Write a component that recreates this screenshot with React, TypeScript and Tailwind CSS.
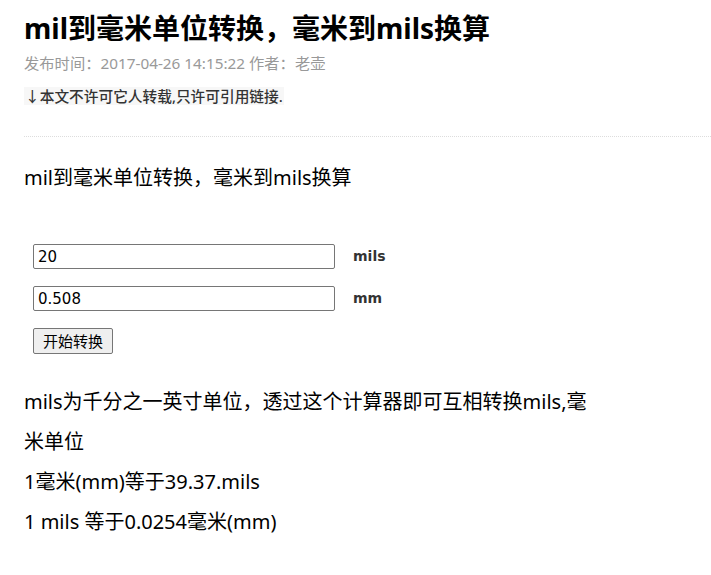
import { useState } from 'react'

const font = 'font-["Noto_Sans","Noto_Sans_CJK_SC",sans-serif]'

export default function App() {
  const [mils, setMils] = useState('20')
  const [mm, setMm] = useState('0.508')

  const convert = () => {
    const v = parseFloat(mils)
    if (!isNaN(v)) setMm(String(+(v * 0.0254).toFixed(6)))
  }

  return (
    <div className={`${font} min-h-[575px] bg-white pl-6 pt-[11px] text-black`}>
      <h1 className="text-[28px] font-bold leading-[34px]">mil到毫米单位转换，毫米到mils换算</h1>
      <div className="mt-[8px] text-[15.3px] leading-[20px] text-[#999]">
        发布时间：2017-04-26 14:15:22 作者：老壶
      </div>
      <div className="mt-[14px] inline-block bg-[#f7f7f7] px-[1px] text-[14.7px] font-medium leading-[18px] text-[#333]">
        ↓本文不许可它人转载,只许可引用链接.
      </div>
      <div className="mt-[28px] border-t border-dotted border-[#ddd]" />

      <p className="mt-[27px] text-[20px] leading-[28px]">mil到毫米单位转换，毫米到mils换算</p>

      <div className="mt-[52px] flex flex-col gap-[17px] pl-[9px]">
        <div className="flex items-center gap-[18px]">
          <input
            value={mils}
            onChange={(e) => setMils(e.target.value)}
            className="h-[25px] w-[302px] rounded-[2px] border border-[#767676] px-[4px] font-['DejaVu_Sans',sans-serif] text-[15px] outline-none"
          />
          <span className="font-['DejaVu_Sans',sans-serif] text-[14px] font-bold text-[#333]">mils</span>
        </div>
        <div className="flex items-center gap-[18px]">
          <input
            value={mm}
            onChange={(e) => setMm(e.target.value)}
            className="h-[25px] w-[302px] rounded-[2px] border border-[#767676] px-[4px] font-['DejaVu_Sans',sans-serif] text-[15px] outline-none"
          />
          <span className="font-['DejaVu_Sans',sans-serif] text-[14px] font-bold text-[#333]">mm</span>
        </div>
        <div>
          <button
            onClick={convert}
            className="h-[26px] w-[80px] rounded-[2px] border border-[#767676] bg-[#efefef] text-[15px] leading-[20px] text-black"
          >
            开始转换
          </button>
        </div>
      </div>

      <div className="mt-[28px] text-[20px] leading-[40px]">
        <p>
          mils为千分之一英寸单位，透过这个计算器即可互相转换mils,毫
          <br />
          米单位
        </p>
        <p>1毫米(mm)等于39.37.mils</p>
        <p>1 mils 等于0.0254毫米(mm)</p>
      </div>
    </div>
  )
}
